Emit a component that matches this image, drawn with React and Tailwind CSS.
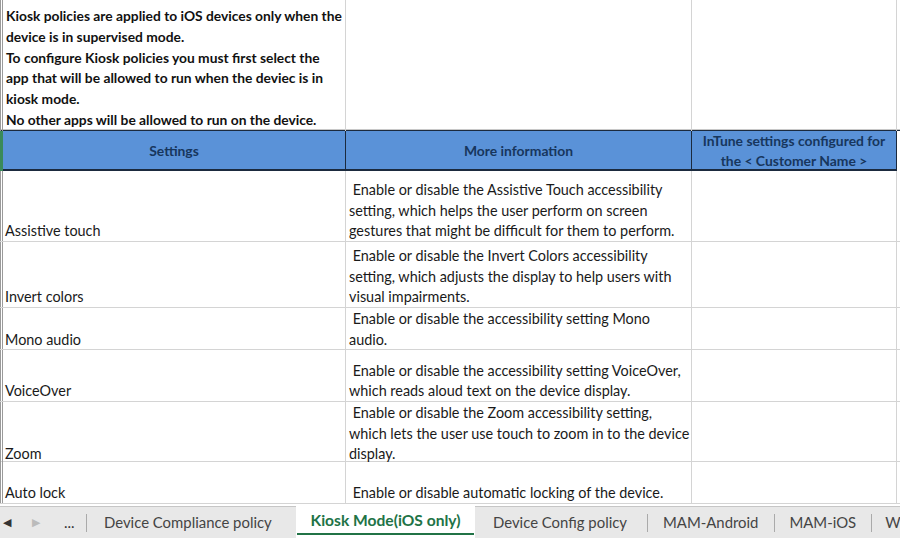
import React from "react";

const rows = [
  { name: "Assistive touch", h: "h-[71px]", info: [" Enable or disable the Assistive Touch accessibility", "setting, which helps the user perform on screen", "gestures that might be difficult for them to perform."] },
  { name: "Invert colors", h: "h-[66px]", info: [" Enable or disable the Invert Colors accessibility", "setting, which adjusts the display to help users with", "visual impairments."] },
  { name: "Mono audio", h: "h-[42px]", info: [" Enable or disable the accessibility setting Mono", "audio."] },
  { name: "VoiceOver", h: "h-[52px]", info: [" Enable or disable the accessibility setting VoiceOver,", "which reads aloud text on the device display."] },
  { name: "Zoom", h: "h-[60px]", info: [" Enable or disable the Zoom accessibility setting,", "which lets the user use touch to zoom in to the device", "display."] },
  { name: "Auto lock", h: "h-[42px]", info: [" Enable or disable automatic locking of the device."] },
];

export default function App() {
  const font = { fontFamily: "Lato, 'Open Sans', sans-serif" };
  return (
    <div className="w-[900px] h-[538px] overflow-hidden bg-white text-[#111] flex flex-col" style={font}>
      <div className="flex-1 overflow-hidden">
        {/* top notes row */}
        <div className="grid grid-cols-[346px_346px_205px_3px] h-[130px] border-b border-[#c8c8c8]">
          <div className="border-l-[3px] border-double border-[#9a9a9a] border-r border-r-[#d4d4d4] flex flex-col justify-start pt-[6px] pl-[3px] text-[13.8px] leading-[20.8px] font-bold whitespace-nowrap">
            <div>Kiosk policies are applied to iOS devices only when the</div>
            <div>device is in supervised mode.</div>
            <div>To configure Kiosk policies you must first select the</div>
            <div>app that will be allowed to run when the deviec is in</div>
            <div>kiosk mode.</div>
            <div>No other apps will be allowed to run on the device.</div>
          </div>
          <div className="border-r border-[#d4d4d4]" />
          <div className="border-r border-[#d4d4d4]" />
          <div />
        </div>
        {/* header */}
        <div className="grid grid-cols-[346px_346px_205px_3px] h-[41px] bg-[#5a92d8] border-b-2 border-[#1b2a3e] border-t border-t-[#1b2a3e] text-[#17365d] font-bold text-[13.9px]">
          <div className="border-l-[3px] border-l-[#3a8a5a] border-r border-r-[#1b2a3e] flex items-center justify-center">Settings</div>
          <div className="border-r border-[#1b2a3e] flex items-center justify-center">More information</div>
          <div className="border-r border-[#1b2a3e] flex flex-col items-center justify-center leading-[20px]">
            <div>InTune settings configured for</div>
            <div>the &lt; Customer Name &gt;</div>
          </div>
          <div className="bg-white" />
        </div>
        {rows.map((r) => (
          <div key={r.name} className={`grid grid-cols-[346px_346px_205px_3px] ${r.h} border-b border-[#d4d4d4] text-[14.4px] leading-[20.7px] text-[#1a1a1a]`}>
            <div className="border-l-[3px] border-double border-[#9a9a9a] border-r border-r-[#d4d4d4] flex items-end pl-[2px]">
              <div className="translate-y-[1px]">{r.name}</div>
            </div>
            <div className="border-r border-[#d4d4d4] flex flex-col justify-end pl-[3px] whitespace-pre">
              <div className="translate-y-[1px]">
                {r.info.map((l, i) => (
                  <div key={i}>{l}</div>
                ))}
              </div>
            </div>
            <div className="border-r border-[#d4d4d4]" />
            <div />
          </div>
        ))}
      </div>
      {/* sheet tabs */}
      <div className="h-[32px] bg-[#e8e8e8] flex items-stretch text-[14.9px] text-[#444] shrink-0 whitespace-nowrap">
        <div className="flex items-center w-[296px] shrink-0 border-t border-[#c6c6c6]">
          <span className="w-[32px] pl-[3px] text-[11px] text-[#333]">◀</span>
          <span className="w-[32px] text-[11px] text-[#bbb]">▶</span>
          <span className="w-[22px] text-[#333]">...</span>
          <span className="h-[18px] w-px bg-[#aaa] mr-[17px]" />
          <span>Device Compliance policy</span>
        </div>
        <div className="w-[179px] shrink-0 bg-white flex flex-col">
          <div className="flex-1 flex items-center justify-center pt-[2px]">
            <span className="font-bold text-[#217346] text-[15.6px]">Kiosk Mode(iOS only)</span>
          </div>
          <div className="h-[2px] bg-[#217346] mb-[3px] mx-[1px]" />
        </div>
        <div className="flex-1 min-w-0 overflow-hidden flex items-center border-t border-[#c6c6c6]">
          <span className="ml-[18px] shrink-0">Device Config policy</span>
          <span className="h-[18px] w-px shrink-0 bg-[#aaa] ml-[20px]" />
          <span className="ml-[15px] shrink-0">MAM-Android</span>
          <span className="h-[18px] w-px shrink-0 bg-[#aaa] ml-[16px]" />
          <span className="ml-[14px] shrink-0">MAM-iOS</span>
          <span className="h-[18px] w-px shrink-0 bg-[#aaa] ml-[15px]" />
          <span className="ml-[13px] shrink-0">W</span>
        </div>
      </div>
    </div>
  );
}
